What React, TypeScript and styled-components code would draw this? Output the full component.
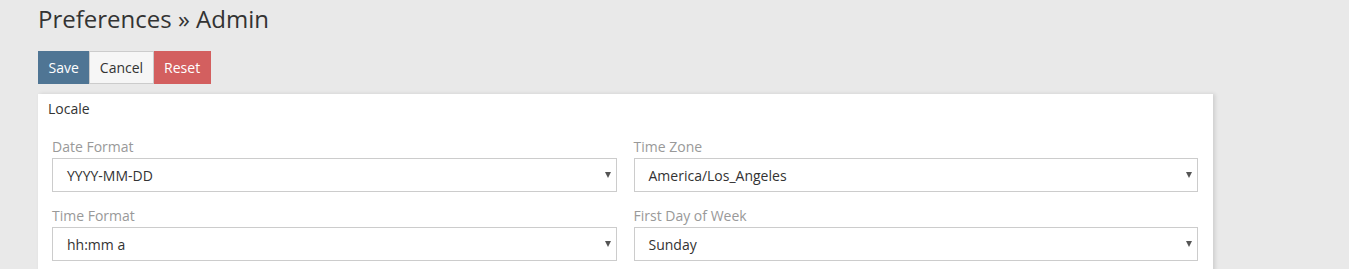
import React from "react";
import styled, { createGlobalStyle } from "styled-components";

const GlobalStyle = createGlobalStyle`
  html, body {
    margin: 0;
    padding: 0;
    background: #e9e9e9;
    font-family: "Open Sans", "Liberation Sans", sans-serif;
    color: #333;
  }
`;

const Page = styled.div`
  padding: 0 136px 0 38px;
`;

const Title = styled.h1`
  margin: 0;
  padding-top: 3px;
  font-size: 24px;
  font-weight: 400;
  line-height: 32px;
  color: #333;
`;

const Toolbar = styled.div`
  display: flex;
  margin-top: 16px;
`;

const Button = styled.button<{ $kind: "primary" | "default" | "danger" }>`
  height: 33px;
  padding: 0 9.5px;
  font-family: inherit;
  font-size: 14px;
  cursor: pointer;
  border: 1px solid
    ${(p) =>
      p.$kind === "primary" ? "#4f7594" : p.$kind === "danger" ? "#d35f5f" : "#cccccc"};
  background: ${(p) =>
    p.$kind === "primary" ? "#4f7594" : p.$kind === "danger" ? "#d35f5f" : "#f6f6f6"};
  color: ${(p) => (p.$kind === "default" ? "#333" : "#fff")};
  border-radius: 0;
`;

const Card = styled.div`
  margin-top: 10px;
  background: #fff;
  box-shadow: 2px 0 4px rgba(0, 0, 0, 0.12);
  padding: 0 15px 20px 14px;
`;

const CardHeader = styled.div`
  margin-left: -4px;
  padding-top: 5px;
  font-size: 14px;
  line-height: 20px;
  color: #333;
`;

const Grid = styled.div`
  display: grid;
  grid-template-columns: 1fr 1fr;
  column-gap: 17px;
  row-gap: 15px;
  margin-top: 19px;
`;

const Field = styled.div`
  display: flex;
  flex-direction: column;
`;

const Label = styled.label`
  font-size: 14px;
  line-height: 18px;
  color: #999;
  margin-bottom: 2px;
`;

const SelectBox = styled.div`
  position: relative;
  height: 34px;
  border: 1px solid #ccc;
  box-sizing: border-box;
  display: flex;
  align-items: center;
  padding-left: 14px;
  font-size: 14px;
  color: #333;
`;

const Caret = styled.span`
  position: absolute;
  right: 5px;
  top: 50%;
  transform: translateY(-50%);
  width: 0;
  height: 0;
  border-left: 3.5px solid transparent;
  border-right: 3.5px solid transparent;
  border-top: 6px solid #555;
`;

const fields = [
  { label: "Date Format", value: "YYYY-MM-DD" },
  { label: "Time Zone", value: "America/Los_Angeles" },
  { label: "Time Format", value: "hh:mm a" },
  { label: "First Day of Week", value: "Sunday" },
];

export default function App() {
  return (
    <>
      <GlobalStyle />
      <Page>
        <Title>Preferences » Admin</Title>
        <Toolbar>
          <Button $kind="primary">Save</Button>
          <Button $kind="default">Cancel</Button>
          <Button $kind="danger">Reset</Button>
        </Toolbar>
        <Card>
          <CardHeader>Locale</CardHeader>
          <Grid>
            {fields.map((f) => (
              <Field key={f.label}>
                <Label>{f.label}</Label>
                <SelectBox>
                  {f.value}
                  <Caret />
                </SelectBox>
              </Field>
            ))}
          </Grid>
        </Card>
      </Page>
    </>
  );
}
